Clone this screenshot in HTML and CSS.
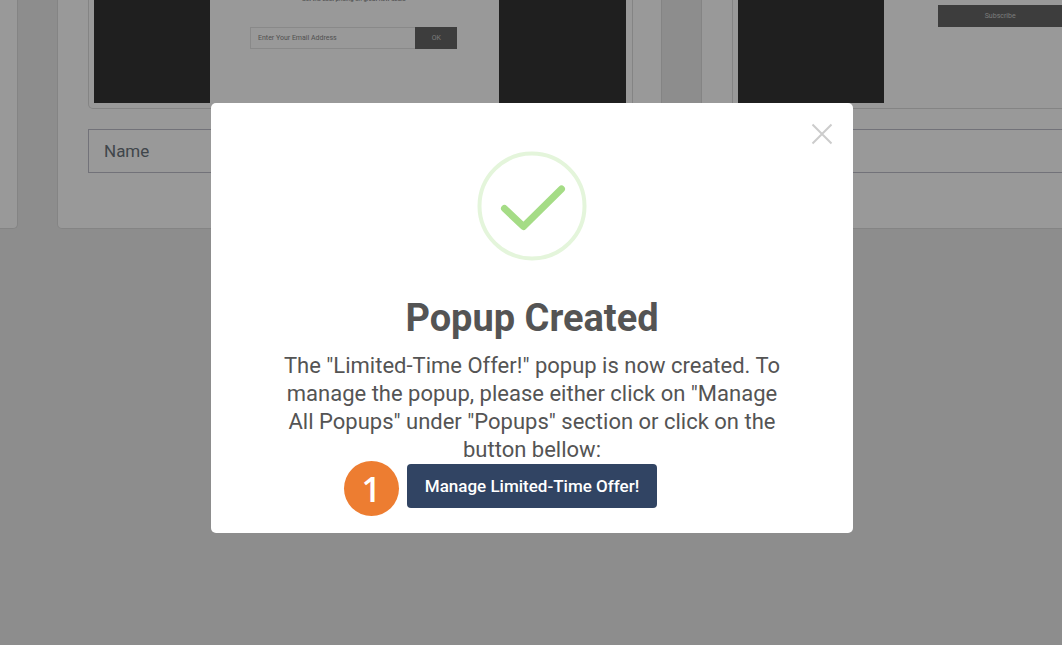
FILE: index.html
```html
<!DOCTYPE html>
<html lang="en">
<head>
<meta charset="utf-8">
<meta name="viewport" content="width=device-width, initial-scale=1">
<title>Popup Created</title>
<link rel="stylesheet" href="styles.css">
</head>
<body>
<main class="board">
  <section class="card card-start"></section>
  <section class="card card-main">
    <div class="preview">
      <div class="shade shade-left"></div>
      <div class="offer">
        <p class="offer-text">Get the best pricing on great new deals</p>
        <div class="offer-form">
          <input class="offer-email" type="email" placeholder="Enter Your Email Address" aria-label="Email address">
          <button class="offer-button" type="button">OK</button>
        </div>
      </div>
      <div class="shade shade-right"></div>
    </div>
    <input class="name" type="text" placeholder="Name" aria-label="Name">
  </section>
  <section class="card card-end">
    <div class="preview preview-end">
      <div class="shade shade-wide"></div>
      <div class="subscribe">
        <button class="offer-button subscribe-button" type="button">Subscribe</button>
      </div>
    </div>
    <input class="name name-end" type="text" aria-label="Name">
  </section>
</main>
<div class="overlay">
  <div class="modal" role="dialog" aria-modal="true" aria-labelledby="title">
    <button class="close" type="button" aria-label="Close">
      <svg width="22" height="22" viewBox="0 0 22 22"><path d="M1.5 1.5l19 19M20.5 1.5l-19 19"/></svg>
    </button>
    <svg class="success" viewBox="0 0 110 110" aria-hidden="true">
      <circle cx="55" cy="55" r="52.5"/>
      <path d="M27.5 57.5L46.5 75.5L84.5 38" />
    </svg>
    <h1 class="title" id="title">Popup Created</h1>
    <p class="message">The "Limited-Time Offer!" popup is now created. To manage the popup, please either click on "Manage All Popups" under "Popups" section or click on the button bellow:</p>
    <div class="action">
      <button class="manage" type="button">Manage Limited-Time Offer!</button>
      <span class="step">1</span>
    </div>
  </div>
</div>
</body>
</html>
```
FILE: styles.css
```css
* { box-sizing: border-box; }

body {
  margin: 0;
  min-height: 100vh;
  background: #ebebeb;
  font-family: Roboto, "Liberation Sans", sans-serif;
  overflow: hidden;
}

button, input { font-family: inherit; }

.board {
  display: flex;
  gap: 39px;
}

.card {
  background: #fff;
  border: 1px solid #dcdcdc;
  border-top: 0;
  border-radius: 0 0 5px 5px;
  padding: 0 28px 55px 30px;
}

.card-start {
  flex: 0 0 18px;
  border-left: 0;
  border-bottom-left-radius: 0;
  padding: 0;
}

.card-main { flex: 0 0 57%; }

.card-end {
  flex: 1;
  border-right: 0;
  border-bottom-right-radius: 0;
  padding: 0 0 55px 30px;
}

.preview {
  display: flex;
  height: 109px;
  padding: 0 6px 5px 5px;
  border: 1px solid #dcdcdc;
  border-top: 0;
  border-radius: 0 0 5px 5px;
}

.preview-end {
  padding-right: 0;
  border-right: 0;
  border-bottom-right-radius: 0;
}

.shade { background: #353535; }
.shade-left { flex: 0 0 116px; }
.shade-right { flex: 0 0 127px; }
.shade-wide { flex: 0 0 146px; }

.offer {
  flex: 1;
  padding: 0 42px 0 40px;
}

.offer-text {
  margin: -8px 0 21px;
  font-size: 6px;
  line-height: 14px;
  text-align: center;
  color: #777;
}

.offer-form { display: flex; }

.offer-email {
  flex: 1;
  min-width: 0;
  height: 22px;
  padding: 0 7px;
  border: 1px solid #e4e4e4;
  border-right: 0;
  background: #fff;
  font-size: 7px;
}

.offer-email::placeholder { color: #888; opacity: 1; }

.offer-button {
  width: 42px;
  height: 22px;
  padding: 0;
  border: 0;
  background: #666;
  color: #ccc;
  font-size: 7px;
}

.subscribe {
  flex: 1;
  padding: 5px 0 0 54px;
}

.subscribe-button {
  display: block;
  width: 100%;
}

.name {
  display: block;
  width: 100%;
  height: 44px;
  margin-top: 20px;
  padding: 0 15px;
  border: 1px solid #bfbfca;
  background: #fff;
  font-size: 17px;
}

.name-end { border-right: 0; }
.name::placeholder { color: #6c757d; opacity: 1; }

.overlay {
  position: fixed;
  inset: 0;
  display: flex;
  align-items: center;
  justify-content: center;
  padding: 0 0 9px 2px;
  background: rgba(0, 0, 0, 0.4);
}

.modal {
  position: relative;
  display: flex;
  flex-direction: column;
  align-items: center;
  width: 642px;
  padding: 48px 64px 25px;
  border-radius: 5px;
  background: #fff;
  text-align: center;
}

.close {
  position: absolute;
  top: 20px;
  right: 20px;
  padding: 0;
  border: 0;
  background: none;
  line-height: 0;
}

.close path {
  fill: none;
  stroke: #ccc;
  stroke-width: 2;
}

.success {
  width: 110px;
  height: 110px;
  fill: none;
}

.success circle {
  stroke: #e4f5db;
  stroke-width: 4;
}

.success path {
  stroke: #a5dc86;
  stroke-width: 7;
  stroke-linecap: round;
  stroke-linejoin: round;
}

.title {
  margin: 35px 0 12px;
  font-size: 38px;
  font-weight: 700;
  line-height: 44px;
  color: #545454;
}

.message {
  margin: 0;
  font-size: 22px;
  line-height: 28px;
  color: #545454;
}

.action { position: relative; }

.manage {
  display: block;
  height: 44px;
  padding: 0 18px;
  border: 0;
  border-radius: 4px;
  background: #314463;
  color: #fff;
  font-size: 17px;
  font-weight: 500;
}

.step {
  position: absolute;
  top: -3px;
  right: 100%;
  display: flex;
  align-items: center;
  justify-content: center;
  width: 55px;
  height: 55px;
  margin-right: 8px;
  border-radius: 50%;
  background: #ed7d31;
  color: #fff;
  font-family: "Open Sans", "Noto Sans", sans-serif;
  font-size: 34px;
  font-weight: 600;
}
```
